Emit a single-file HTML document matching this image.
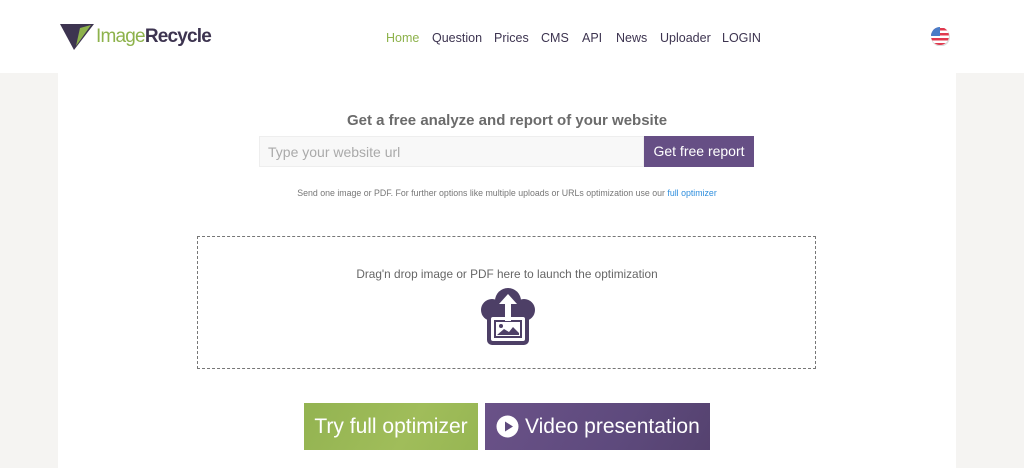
<!DOCTYPE html>
<html><head><meta charset="utf-8"><style>
*{margin:0;padding:0;box-sizing:border-box}
body{width:1024px;height:468px;overflow:hidden;background:#f5f4f2;font-family:"Liberation Sans",Arial,sans-serif;position:relative}
.hdr{position:absolute;left:0;top:0;width:1024px;height:73px;background:#fff}
.main{position:absolute;left:58px;top:73px;width:898px;height:395px;background:#fff}
.nav{position:absolute;top:31px;left:386px;font-size:12.5px;color:#3d3450}
.nav span{position:absolute;white-space:nowrap}
.abs{position:absolute}
</style></head><body>
<div class="hdr">
  <svg class="abs" style="left:60px;top:24px" width="34" height="26" viewBox="0 0 34 26">
    <polygon points="0,0 34,0 14,26" fill="#3d3450"/>
    <polygon points="20,4 31,1 16,22" fill="#8db24b"/>
  </svg>
  <div class="abs" style="left:96px;top:26px;font-size:19px;letter-spacing:-0.8px;line-height:22px"><span style="color:#8db24b">Image</span><span style="color:#3d3450;font-weight:bold">Recycle</span></div>
  <div class="nav">
    <span style="left:0;color:#8db24b">Home</span>
    <span style="left:46px">Question</span>
    <span style="left:108px">Prices</span>
    <span style="left:155px">CMS</span>
    <span style="left:196px">API</span>
    <span style="left:230px">News</span>
    <span style="left:274px">Uploader</span>
    <span style="left:336px">LOGIN</span>
  </div>
  <svg class="abs" style="left:930px;top:26px" width="20" height="20" viewBox="0 0 20 20">
    <defs><clipPath id="c"><circle cx="10" cy="10" r="9"/></clipPath></defs>
    <circle cx="10.5" cy="11" r="9.5" fill="#ddd"/>
    <g clip-path="url(#c)"><rect width="20" height="20" fill="#fff"/>
    <rect y="2" width="20" height="2.5" fill="#e0394e"/><rect y="7" width="20" height="2.5" fill="#e0394e"/><rect y="12" width="20" height="2.5" fill="#e0394e"/><rect y="17" width="20" height="2.5" fill="#e0394e"/>
    <rect width="10" height="10" fill="#4a7cc7"/></g>
  </svg>
</div>
<div class="main">
  <div class="abs" style="left:0;width:898px;top:39px;text-align:center;font-size:15px;font-weight:bold;color:#6b6b6b">Get a free analyze and report of your website</div>
  <div class="abs" style="left:201px;top:63px;width:385px;height:31px;background:#f8f8f8;border:1px solid #eee;font-size:14px;color:#aaa;padding:7px 0 0 8px">Type your website url</div>
  <div class="abs" style="left:586px;top:63px;width:110px;height:31px;background:#664f85;color:#fff;font-size:14px;text-align:center;line-height:31px">Get free report</div>
  <div class="abs" style="left:0;width:898px;top:115px;text-align:center;font-size:8.8px;color:#777">Send one image or PDF. For further options like multiple uploads or URLs optimization use our <span style="color:#2f8fde">full optimizer</span></div>
  <div class="abs" style="left:139px;top:163px;width:619px;height:133px;border:1px dashed #777"></div>
  <div class="abs" style="left:0;width:898px;top:194px;text-align:center;font-size:11.8px;color:#666">Drag'n drop image or PDF here to launch the optimization</div>
  <svg class="abs" style="left:421px;top:214px" width="58" height="58" viewBox="0 0 58 58">
    <g fill="#4d3f66">
      <circle cx="29" cy="14" r="13"/><circle cx="13" cy="23" r="11"/><circle cx="45" cy="23" r="11"/>
      <rect x="8" y="24" width="42" height="34" rx="5"/>
    </g>
    <rect x="12" y="30" width="34" height="24" rx="2" fill="#fff"/>
    <rect x="15" y="33" width="28" height="18" fill="#4d3f66"/>
    <rect x="17" y="35" width="24" height="14" fill="#fff"/>
    <circle cx="22" cy="39" r="2" fill="#4d3f66"/>
    <polygon points="18,48 25,42 30,45 34,40 40,46 40,48" fill="#4d3f66"/>
    <rect x="26" y="14" width="6" height="20" fill="#fff"/>
    <polygon points="20,17 29,7 38,17" fill="#fff"/>
  </svg>
  <div class="abs" style="left:246px;top:330px;width:174px;height:47px;background:linear-gradient(120deg,#93b351,#a0bd5a 60%,#97b653);color:#fff;font-size:21px;text-align:center;line-height:47px">Try full optimizer</div>
  <div class="abs" style="left:427px;top:330px;width:225px;height:47px;background:linear-gradient(120deg,#6a5288,#5e4a7d 60%,#55426f);color:#fff;font-size:21px;line-height:47px;padding-left:40px">Video presentation</div>
  <svg class="abs" style="left:438px;top:342px" width="23" height="23" viewBox="0 0 23 23"><circle cx="11.5" cy="11.5" r="11" fill="#fff"/><polygon points="9,6.5 17,11.5 9,16.5" fill="#5e4a7d"/></svg>
</div>
</body></html>
